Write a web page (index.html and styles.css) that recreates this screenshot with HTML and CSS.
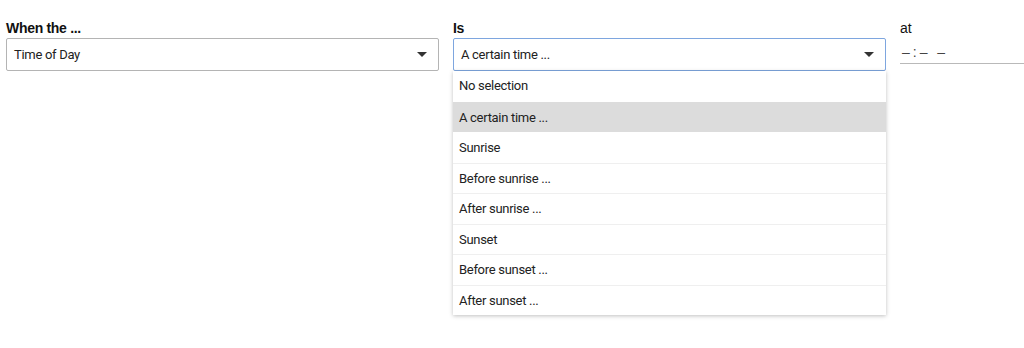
FILE: index.html
```html
<!DOCTYPE html>
<html>
<head>
<meta charset="utf-8">
<link rel="stylesheet" href="styles.css">
</head>
<body>
<div class="row">
  <div class="field">
    <div class="label">When the ...</div>
    <div class="select">
      <span>Time of Day</span>
      <svg class="caret" width="10" height="5" viewBox="0 0 10 5"><path d="M0 0H10L5 5Z" fill="#333"/></svg>
    </div>
  </div>
  <div class="field">
    <div class="label">Is</div>
    <div class="select open">
      <span>A certain time ...</span>
      <svg class="caret" width="10" height="5" viewBox="0 0 10 5"><path d="M0 0H10L5 5Z" fill="#333"/></svg>
      <ul class="menu">
        <li>No selection</li>
        <li class="active">A certain time ...</li>
        <li>Sunrise</li>
        <li>Before sunrise ...</li>
        <li>After sunrise ...</li>
        <li>Sunset</li>
        <li>Before sunset ...</li>
        <li>After sunset ...</li>
      </ul>
    </div>
  </div>
  <div class="field">
    <div class="label light">at</div>
    <div class="time">&#8211;:&#8211; &#8211;</div>
  </div>
</div>
</body>
</html>
```
FILE: styles.css
```css
html, body { margin: 0; padding: 0; background: #fff; overflow: hidden; }
body { width: 1024px; height: 348px; }
.row {
  display: grid;
  grid-template-columns: 433px 433px 140px;
  column-gap: 14px;
  padding: 18px 0 0 6px;
}
.label {
  font-family: "Liberation Sans", Arial, sans-serif;
  font-weight: bold;
  font-size: 14px;
  color: #111;
  height: 20px;
  line-height: 20px;
  letter-spacing: -0.3px;
}
.label.light { font-weight: normal; letter-spacing: 0; }
.select {
  position: relative;
  box-sizing: border-box;
  height: 33px;
  border: 1px solid #b4b4b4;
  border-radius: 2px;
  display: flex;
  align-items: center;
  padding: 0 10px 0 7px;
  font-family: Roboto, "Liberation Sans", sans-serif;
  font-size: 13px;
  color: #222;
  letter-spacing: -0.3px;
}
.select span { flex: 1; }
.select.open { border-color: #7ea6df; }
.caret { flex: none; margin-right: 1px; }
.menu {
  position: absolute;
  left: -1px;
  right: -1px;
  top: 32px;
  margin: 0;
  padding: 0;
  list-style: none;
  background: #fff;
  box-shadow: 0 1px 4px rgba(0,0,0,0.25);
  z-index: 2;
}
.menu li {
  height: 30.5px;
  line-height: 30px;
  padding-left: 6px;
  border-top: 1px solid #efefef;
  box-sizing: border-box;
}
.menu li:first-child { border-top: none; }
.menu li.active { background: #dcdcdc; border-top-color: #dcdcdc; }
.menu li.active + li { border-top-color: #fff; }
.time {
  box-sizing: border-box;
  height: 26px;
  line-height: 28px;
  border-bottom: 1px solid #b9b9b9;
  font-family: "Liberation Sans", Arial, sans-serif;
  font-size: 14px;
  color: #444;
  letter-spacing: 3px;
  padding-left: 2px;
  width: 140px;
}
```
